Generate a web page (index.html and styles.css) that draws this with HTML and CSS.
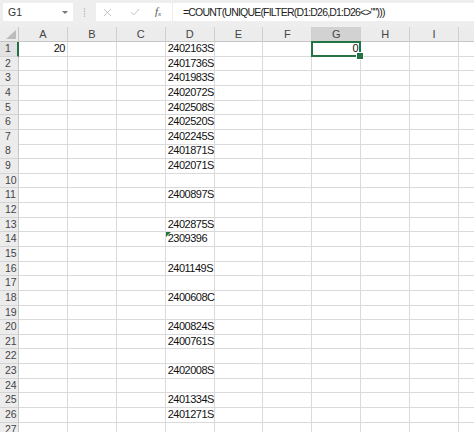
FILE: index.html
```html
<!DOCTYPE html>
<html>
<head>
<meta charset="utf-8">
<link rel="stylesheet" href="styles.css">
</head>
<body>
<div class="fbar">
  <div class="namebox"><span>G1</span><span class="caret"></span></div>
  <div class="grip"><svg width="3" height="9" viewBox="0 0 3 9"><circle cx="1.5" cy="1" r="0.8"/><circle cx="1.5" cy="3.5" r="0.8"/><circle cx="1.5" cy="6" r="0.8"/><circle cx="1.5" cy="8.3" r="0.7"/></svg></div>
  <div class="tools">
    <svg class="x" width="9" height="9" viewBox="0 0 9 9"><path d="M1 1L8 8M8 1L1 8"/></svg>
    <svg class="ok" width="10" height="8" viewBox="0 0 10 8"><path d="M1 4.2L3.8 7L9 1"/></svg>
    <span class="fx">f<sub>x</sub></span>
  </div>
  <div class="formula">=COUNT(UNIQUE(FILTER(D1:D26,D1:D26&lt;&gt;"")))</div>
</div>
<div class="sheet">
  <div class="row head"><div class="corner"></div><div>A</div><div>B</div><div>C</div><div>D</div><div>E</div><div>F</div><div class="sel">G</div><div>H</div><div>I</div><div></div></div>
  <div class="row"><div class="rh selr">1</div><div class="num">20</div><div></div><div></div><div>2402163S</div><div></div><div></div><div class="num active">0</div><div></div><div></div><div></div></div>
  <div class="row"><div class="rh">2</div><div></div><div></div><div></div><div>2401736S</div><div></div><div></div><div></div><div></div><div></div><div></div></div>
  <div class="row"><div class="rh">3</div><div></div><div></div><div></div><div>2401983S</div><div></div><div></div><div></div><div></div><div></div><div></div></div>
  <div class="row"><div class="rh">4</div><div></div><div></div><div></div><div>2402072S</div><div></div><div></div><div></div><div></div><div></div><div></div></div>
  <div class="row"><div class="rh">5</div><div></div><div></div><div></div><div>2402508S</div><div></div><div></div><div></div><div></div><div></div><div></div></div>
  <div class="row"><div class="rh">6</div><div></div><div></div><div></div><div>2402520S</div><div></div><div></div><div></div><div></div><div></div><div></div></div>
  <div class="row"><div class="rh">7</div><div></div><div></div><div></div><div>2402245S</div><div></div><div></div><div></div><div></div><div></div><div></div></div>
  <div class="row"><div class="rh">8</div><div></div><div></div><div></div><div>2401871S</div><div></div><div></div><div></div><div></div><div></div><div></div></div>
  <div class="row"><div class="rh">9</div><div></div><div></div><div></div><div>2402071S</div><div></div><div></div><div></div><div></div><div></div><div></div></div>
  <div class="row"><div class="rh">10</div><div></div><div></div><div></div><div></div><div></div><div></div><div></div><div></div><div></div><div></div></div>
  <div class="row"><div class="rh">11</div><div></div><div></div><div></div><div>2400897S</div><div></div><div></div><div></div><div></div><div></div><div></div></div>
  <div class="row"><div class="rh">12</div><div></div><div></div><div></div><div></div><div></div><div></div><div></div><div></div><div></div><div></div></div>
  <div class="row"><div class="rh">13</div><div></div><div></div><div></div><div>2402875S</div><div></div><div></div><div></div><div></div><div></div><div></div></div>
  <div class="row"><div class="rh">14</div><div></div><div></div><div></div><div class="warn">2309396</div><div></div><div></div><div></div><div></div><div></div><div></div></div>
  <div class="row"><div class="rh">15</div><div></div><div></div><div></div><div></div><div></div><div></div><div></div><div></div><div></div><div></div></div>
  <div class="row"><div class="rh">16</div><div></div><div></div><div></div><div>2401149S</div><div></div><div></div><div></div><div></div><div></div><div></div></div>
  <div class="row"><div class="rh">17</div><div></div><div></div><div></div><div></div><div></div><div></div><div></div><div></div><div></div><div></div></div>
  <div class="row"><div class="rh">18</div><div></div><div></div><div></div><div>2400608C</div><div></div><div></div><div></div><div></div><div></div><div></div></div>
  <div class="row"><div class="rh">19</div><div></div><div></div><div></div><div></div><div></div><div></div><div></div><div></div><div></div><div></div></div>
  <div class="row"><div class="rh">20</div><div></div><div></div><div></div><div>2400824S</div><div></div><div></div><div></div><div></div><div></div><div></div></div>
  <div class="row"><div class="rh">21</div><div></div><div></div><div></div><div>2400761S</div><div></div><div></div><div></div><div></div><div></div><div></div></div>
  <div class="row"><div class="rh">22</div><div></div><div></div><div></div><div></div><div></div><div></div><div></div><div></div><div></div><div></div></div>
  <div class="row"><div class="rh">23</div><div></div><div></div><div></div><div>2402008S</div><div></div><div></div><div></div><div></div><div></div><div></div></div>
  <div class="row"><div class="rh">24</div><div></div><div></div><div></div><div></div><div></div><div></div><div></div><div></div><div></div><div></div></div>
  <div class="row"><div class="rh">25</div><div></div><div></div><div></div><div>2401334S</div><div></div><div></div><div></div><div></div><div></div><div></div></div>
  <div class="row"><div class="rh">26</div><div></div><div></div><div></div><div>2401271S</div><div></div><div></div><div></div><div></div><div></div><div></div></div>
  <div class="row"><div class="rh">27</div><div></div><div></div><div></div><div></div><div></div><div></div><div></div><div></div><div></div><div></div></div>
</div>
</body>
</html>
```
FILE: styles.css
```css
* { box-sizing: border-box; }
html, body { margin: 0; padding: 0; }
body {
  width: 474px;
  height: 432px;
  overflow: hidden;
  background: #fff;
  font-family: "Liberation Sans", Arial, sans-serif;
}
.fbar {
  height: 27px;
  background: #eeeeee;
  display: flex;
  align-items: flex-start;
  padding: 3px 0 0 3px;
}
.namebox {
  width: 70px;
  height: 18px;
  background: #fff;
  display: flex;
  align-items: center;
  justify-content: space-between;
  padding: 0 5px 0 5px;
  font-size: 10.5px;
  color: #333;
}
.caret {
  width: 0;
  height: 0;
  border-left: 3px solid transparent;
  border-right: 3px solid transparent;
  border-top: 3px solid #777;
}
.grip {
  width: 23px;
  height: 18px;
  display: flex;
  align-items: center;
  justify-content: center;
}
.grip svg { fill: #b8b8b8; }
.tools {
  width: 76px;
  height: 18px;
  background: #fff;
  display: flex;
  align-items: center;
  padding-left: 7px;
}
.tools svg { fill: none; stroke: #c4c4c4; stroke-width: 1; }
.tools .ok { margin-left: 18px; }
.fx {
  margin-left: 15px;
  font-family: "Liberation Serif", serif;
  font-style: italic;
  font-size: 11px;
  color: #555;
  line-height: 12px;
}
.fx sub { font-size: 7px; vertical-align: -1px; }
.formula {
  margin-left: 1px;
  flex: 1;
  height: 18px;
  background: #fff;
  padding-left: 10px;
  font-size: 10.5px;
  line-height: 18px;
  letter-spacing: -0.8px;
  color: #222;
  white-space: nowrap;
}
.row {
  display: grid;
  grid-template-columns: 19px repeat(9, 48.9px) 1fr;
  height: 14.65px;
}
.row > div {
  border-right: 1px solid #dadada;
  border-bottom: 1px solid #dadada;
  font-size: 11px;
  letter-spacing: -0.5px;
  line-height: 13.65px;
  padding: 0 2px;
  white-space: nowrap;
  color: #111;
  position: relative;
}
.row > div:last-child { border-right: none; }
.row > .rh {
  background: #ececec;
  color: #444;
  border-right-color: #c6c6c6;
  border-bottom-color: #d4d4d4;
  padding-left: 5px;
  font-size: 10.5px;
  letter-spacing: 0;
}
.row > .selr {
  background: #e2e2e2;
  border-right: 2px solid #217346;
}
.row > .num { text-align: right; }
.head { height: 15px; }
.head > div {
  background: #ececec;
  border-bottom-color: #c6c6c6;
  border-right-color: #d0d0d0;
  text-align: center;
  font-size: 11px;
  letter-spacing: 0;
  color: #444;
  line-height: 14px;
}
.head > .sel { background: #d2d2d2; }
.head > .corner { border-right-color: #c6c6c6; }
.corner::after {
  content: "";
  position: absolute;
  right: 2px;
  bottom: 2px;
  width: 0;
  height: 0;
  border-left: 10px solid transparent;
  border-bottom: 9px solid #bcbcbc;
}
.active::after {
  content: "";
  position: absolute;
  left: -1px;
  top: -1px;
  right: -1px;
  bottom: -1px;
  border: 2px solid #217346;
}
.active::before {
  content: "";
  position: absolute;
  right: -4px;
  bottom: -4px;
  width: 6px;
  height: 6px;
  background: #217346;
  border: 1px solid #fff;
  z-index: 2;
}
.warn::before {
  content: "";
  position: absolute;
  left: 0;
  top: 0;
  width: 0;
  height: 0;
  border-top: 5px solid #1e7a3a;
  border-right: 5px solid transparent;
}
```
